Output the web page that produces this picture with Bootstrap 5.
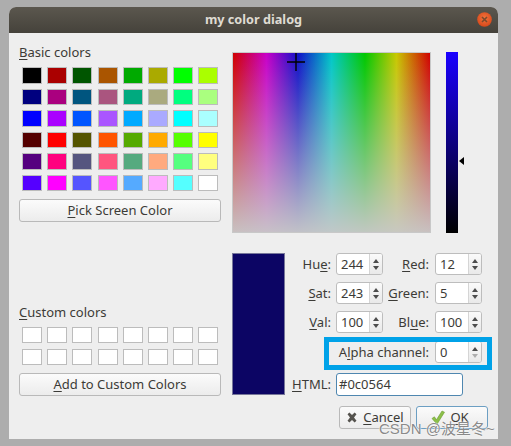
<!doctype html>
<html><head><meta charset="utf-8">
<link href="https://cdn.jsdelivr.net/npm/bootstrap@5.3.0/dist/css/bootstrap.min.css" rel="stylesheet">
<style>
html,body{height:100%;}
body{background:#adadad;margin:0;font-family:"Noto Sans","DejaVu Sans",sans-serif;font-size:13px;color:#3c3b37;overflow:hidden;position:relative;}
.qt-win{width:489px;height:432px;margin:7px 0 0 9px;background:#eeeeee;border-radius:7px 7px 0 0;overflow:hidden;}
.qt-title{height:26px;background:linear-gradient(#5b574e,#45423b);color:#dfdbd2;font-weight:700;font-size:12.7px;position:relative;}
.qt-close{position:absolute;right:6px;top:5px;width:15px;height:15px;display:block;}
.qt-main{padding:11px 0 0 10px;}
.qt-left{width:202px;height:352px;flex:none;}
.qt-lab{line-height:16px;height:16px;margin-bottom:7px;}
.qt-grid{display:grid;grid-template-columns:repeat(8,20px);column-gap:5.2px;row-gap:5.1px;margin-left:3px;width:197px;}
.qt-sw{width:20px;height:16.5px;border:1px solid #bcbcbc;}
.qt-btn{display:block;width:100%;border:1px solid #b9b9b9;border-radius:3px;background:linear-gradient(#fbfbfb,#ececec);height:23px;line-height:21px;text-align:center;color:#3c3b37;padding:0;font-size:13px;}
.qt-gap8{margin-top:8px;}
.qt-right{width:260px;margin:8px 0 0 11px;flex:none;}
.qt-sv{width:199px;height:181px;flex:none;border:1px solid #c8c8c8;position:relative;background:linear-gradient(to bottom,rgba(200,200,200,0),rgba(200,200,200,.96)),linear-gradient(to right,#d00000,#c800c8 17%,#1010c8 33%,#00c8c8 50%,#00c800 67%,#c8c800 83%,#d00000);}
.qt-cross{position:absolute;left:54px;top:0;display:block;}
.qt-bar{width:12px;margin-left:15px;height:181px;flex:none;background:linear-gradient(#1a00ff,#000);position:relative;}
.qt-tri{position:absolute;left:13px;top:105px;width:0;height:0;border-style:solid;border-width:4px 5px 4px 0;border-color:transparent #000 transparent transparent;}
.qt-lower{margin-top:20px;}
.qt-prev{width:53px;height:142px;flex:none;background:#0c0564;border:1px solid #77779a;}
.qt-form{width:197px;flex:none;}
.qt-f{display:flex;align-items:center;height:22px;margin-bottom:7px;}
.qt-f4{margin-top:8px;margin-bottom:10px;justify-content:flex-end;}
.qt-l{text-align:right;width:46px;white-space:nowrap;flex:none;padding-top:1px;}
.qt-l4{width:auto;}
.qt-spin{width:47px;height:22px;flex:none;background:#fff;border:1px solid #bdbdbd;border-radius:3px;display:flex;margin-left:5px;}
.qt-s2{margin-left:6px;}
.qt-v{flex:1;padding-left:4px;line-height:21px;}
.qt-arr{width:13px;border-left:1px solid #d5d5d5;display:flex;flex-direction:column;align-items:center;justify-content:center;gap:3px;background:linear-gradient(#fafafa,#e9e9e9);border-radius:0 2px 2px 0;}
.qt-up{width:0;height:0;border-style:solid;border-width:0 3.5px 4px;border-color:transparent transparent #4c4c4c;}
.qt-dn{width:0;height:0;border-style:solid;border-width:4px 3.5px 0;border-color:#4c4c4c transparent transparent;}
.qt-dn.qt-off{border-top-color:#adadad;}
.qt-htmlrow{display:flex;align-items:center;height:23px;}
.qt-html{width:127px;height:23px;background:#fff;border:1px solid #4f87b0;border-radius:3px;padding-left:2px;line-height:21px;margin-left:5px;flex:none;}
.qt-h{width:46px;text-align:right;flex:none;}
.qt-foot{padding:10px 10px 0 0;gap:5px;justify-content:flex-end;}
.qt-fb{width:72px;height:23px;border:1px solid #b9b9b9;border-radius:3px;background:linear-gradient(#fbfbfb,#ececec);display:flex;align-items:center;justify-content:center;gap:5px;padding:0;color:#3c3b37;font-size:13px;}
.qt-ok{border-color:#6c9fc3;padding-right:4px;}
.qt-ring{position:absolute;left:324px;top:337px;width:168px;height:33px;border:5px solid #00a2e8;}
.qt-wm{position:absolute;left:379px;top:421px;font-size:15px;color:#8a8a8a;white-space:nowrap;font-family:"Liberation Sans","Noto Sans CJK SC",sans-serif;line-height:1;text-shadow:0 0 1px #fff,0 0 2px #fff;}
u{text-underline-offset:2px;}
</style></head>
<body>
<div class="qt-win">
  <div class="qt-title d-flex align-items-center justify-content-center">my color dialog
    <svg class="qt-close" viewBox="0 0 15 15"><defs><radialGradient id="cl" cx=".5" cy=".4" r=".6"><stop offset="0" stop-color="#f2743d"/><stop offset="1" stop-color="#d6481a"/></radialGradient></defs><circle cx="7.5" cy="7.5" r="7.3" fill="url(#cl)"/><path d="M5 5l5 5M10 5l-5 5" stroke="#7b4a2c" stroke-width="1.6"/></svg>
  </div>
  <div class="qt-main d-flex">
    <div class="qt-left d-flex flex-column">
      <div class="qt-lab"><u>B</u>asic colors</div>
      <div class="qt-grid" id="basic"></div>
      <button class="qt-btn qt-gap8"><u>P</u>ick Screen Color</button>
      <div class="flex-grow-1"></div>
      <div class="qt-lab"><u>C</u>ustom colors</div>
      <div class="qt-grid" id="custom"></div>
      <button class="qt-btn qt-gap8"><u>A</u>dd to Custom Colors</button>
    </div>
    <div class="qt-right">
      <div class="d-flex">
        <div class="qt-sv"><svg class="qt-cross" width="18" height="18" viewBox="0 0 18 18"><path d="M9 0v18M0 9h18" stroke="#000" stroke-width="1.4"/></svg></div>
        <div class="qt-bar"><span class="qt-tri"></span></div>
      </div>
      <div class="qt-lower d-flex">
        <div class="qt-prev"></div>
        <div class="qt-form">
          <div class="qt-f"><span class="qt-l">Hu<u>e</u>:</span><span class="qt-spin"><span class="qt-v">244</span><span class="qt-arr"><i class="qt-up"></i><i class="qt-dn"></i></span></span><span class="qt-l"><u>R</u>ed:</span><span class="qt-spin qt-s2"><span class="qt-v">12</span><span class="qt-arr"><i class="qt-up"></i><i class="qt-dn"></i></span></span></div>
          <div class="qt-f"><span class="qt-l"><u>S</u>at:</span><span class="qt-spin"><span class="qt-v">243</span><span class="qt-arr"><i class="qt-up"></i><i class="qt-dn"></i></span></span><span class="qt-l"><u>G</u>reen:</span><span class="qt-spin qt-s2"><span class="qt-v">5</span><span class="qt-arr"><i class="qt-up"></i><i class="qt-dn"></i></span></span></div>
          <div class="qt-f"><span class="qt-l"><u>V</u>al:</span><span class="qt-spin"><span class="qt-v">100</span><span class="qt-arr"><i class="qt-up"></i><i class="qt-dn"></i></span></span><span class="qt-l">Bl<u>u</u>e:</span><span class="qt-spin qt-s2"><span class="qt-v">100</span><span class="qt-arr"><i class="qt-up"></i><i class="qt-dn"></i></span></span></div>
          <div class="qt-f qt-f4"><span class="qt-l qt-l4">A<u>l</u>pha channel:</span><span class="qt-spin qt-s2"><span class="qt-v">0</span><span class="qt-arr"><i class="qt-up"></i><i class="qt-dn qt-off"></i></span></span></div>
          <div class="qt-htmlrow"><span class="qt-h"><u>H</u>TML:</span><span class="qt-html">#0c0564</span></div>
        </div>
      </div>
    </div>
  </div>
  <div class="qt-foot d-flex">
    <button class="qt-fb"><svg width="12" height="11" viewBox="0 0 12 11"><path d="M1.5 2.2L3.4.6 6 3l2.6-2.4 1.9 1.6L8 5.5l2.5 3.3-1.9 1.6L6 8 3.4 10.4 1.5 8.8 4 5.5z" fill="#55534e"/></svg><span><u>C</u>ancel</span></button>
    <button class="qt-fb qt-ok"><svg width="14" height="15" viewBox="0 0 14 15"><path d="M1 8.5l2.4-1.7 2 3L11 1l2.5 1.2L6 14.2z" fill="#8cc04a" stroke="#6d9c33" stroke-width=".6"/></svg><span><u>O</u>K</span></button>
  </div>
</div>
<div class="qt-ring"></div>
<div class="qt-wm">CSDN @波星冬~</div>
<script>
const c=["000000","aa0000","005500","aa5500","00aa00","aaaa00","00ff00","aaff00","00007f","aa007f","00557f","aa557f","00aa7f","aaaa7f","00ff7f","aaff7f","0000ff","aa00ff","0055ff","aa55ff","00aaff","aaaaff","00ffff","aaffff","550000","ff0000","555500","ff5500","55aa00","ffaa00","55ff00","ffff00","55007f","ff007f","55557f","ff557f","55aa7f","ffaa7f","55ff7f","ffff7f","5500ff","ff00ff","5555ff","ff55ff","55aaff","ffaaff","55ffff","ffffff"];
document.getElementById('basic').innerHTML=c.map(x=>`<div class="qt-sw" style="background:#${x}"></div>`).join('');
document.getElementById('custom').innerHTML=Array(16).fill('<div class="qt-sw" style="background:#fff"></div>').join('');
</script>
<script src="https://cdn.jsdelivr.net/npm/bootstrap@5.3.0/dist/js/bootstrap.bundle.min.js"></script>
</body></html>
